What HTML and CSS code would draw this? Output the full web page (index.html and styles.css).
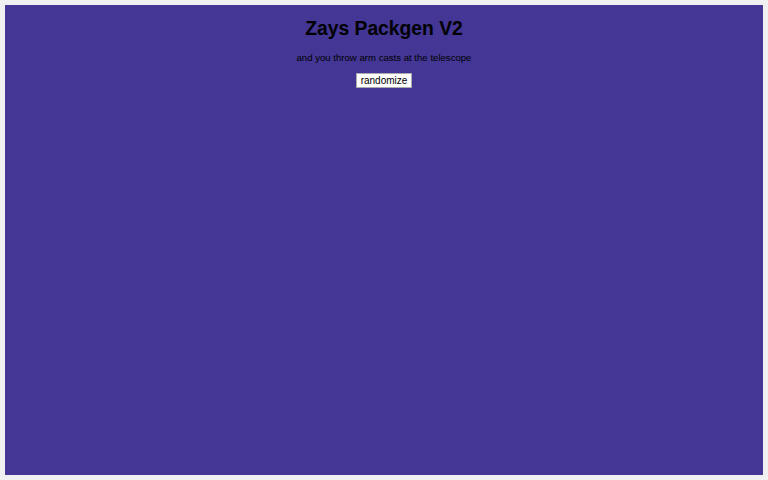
FILE: index.html
```html
<!DOCTYPE html>
<html lang="en">
<head>
  <meta charset="UTF-8">
  <meta name="viewport" content="width=device-width, initial-scale=1.0">
  <title>Zays Packgen V2</title>
  <link rel="stylesheet" href="styles.css">
</head>
<body>
  <h1>Zays Packgen V2</h1>
  <p class="tagline">and you throw arm casts at the telescope</p>
  <button class="roll">randomize</button>
</body>
</html>
```

FILE: styles.css
```css
html {
  background: #f0f0f2;
}

body {
  font-family: 'Liberation Sans', Arial, sans-serif;
  background: #433694;
  color: #000;
  margin: 5px;
  height: calc(100vh - 10px);
  box-sizing: border-box;
  padding-top: 13px;
  text-align: center;
}

h1 {
  font-size: 19.3px;
  font-weight: bold;
  margin: 0;
  line-height: 22px;
}

.tagline {
  font-size: 9.6px;
  margin: 12px 0 0;
  line-height: 12px;
}

.roll {
  font-family: 'Liberation Sans', Arial, sans-serif;
  font-size: 10px;
  margin-top: 9px;
  padding: 1px 4px;
  background: #fff;
  border: 1px solid #a9a9b0;
  border-radius: 0;
  color: #000;
}
```
